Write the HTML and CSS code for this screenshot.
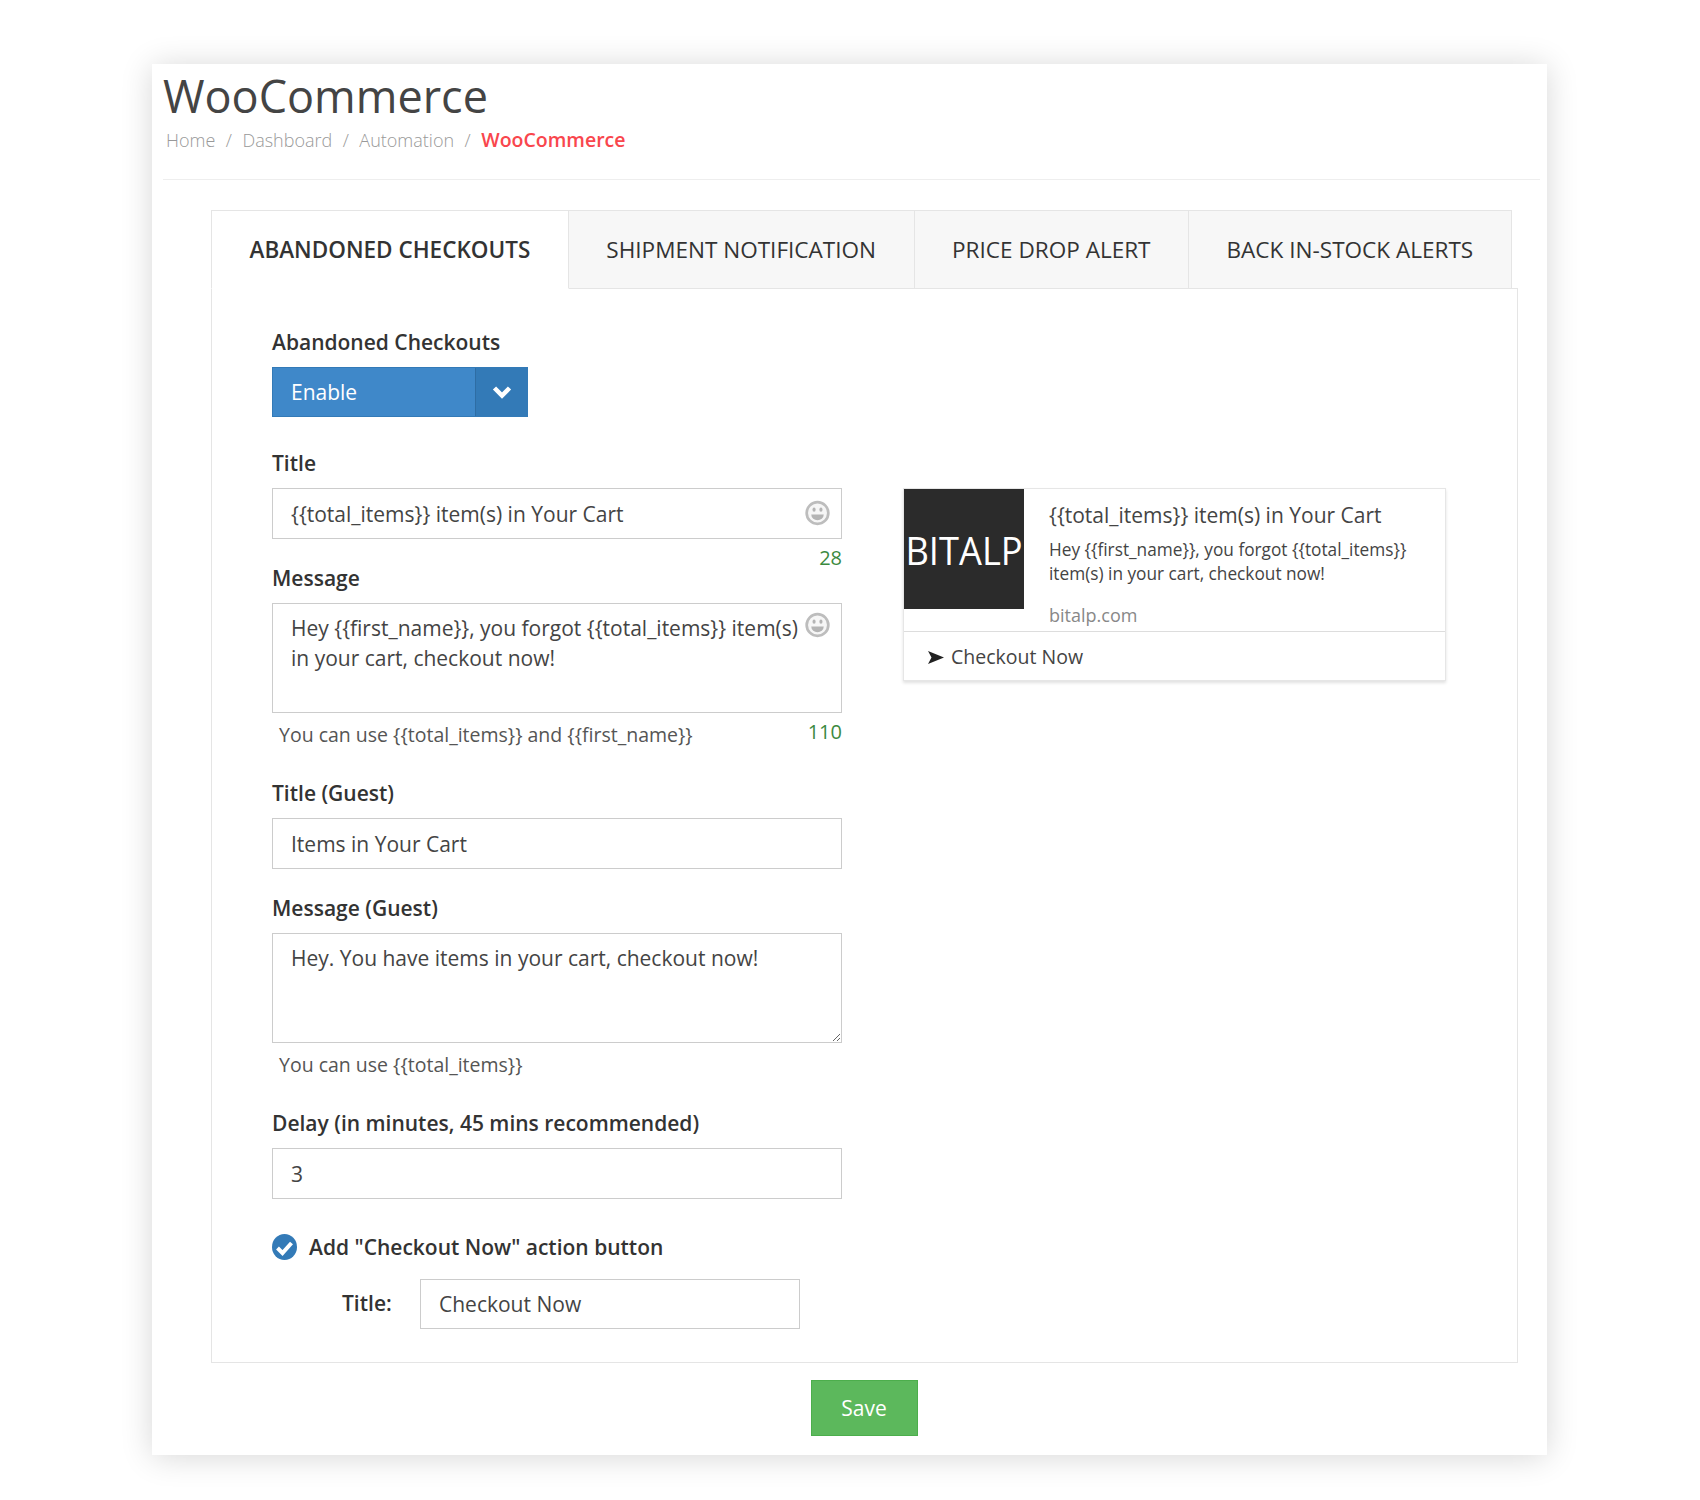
FILE: index.html
```html
<!DOCTYPE html>
<html lang="en">
<head>
  <meta charset="UTF-8">
  <title>WooCommerce</title>
  <link rel="stylesheet" href="styles.css">
</head>

<body>
  <div class="page">
    <div class="page-head">
      <h1>WooCommerce</h1>
      <ul class="crumbs">
        <li>Home</li>
        <li class="sep">/</li>
        <li>Dashboard</li>
        <li class="sep">/</li>
        <li>Automation</li>
        <li class="sep">/</li>
        <li class="current">WooCommerce</li>
      </ul>
    </div>

    <div class="tabs">
      <div class="tab active">ABANDONED CHECKOUTS</div>
      <div class="tab">SHIPMENT NOTIFICATION</div>
      <div class="tab">PRICE DROP ALERT</div>
      <div class="tab">BACK IN-STOCK ALERTS</div>
    </div>

    <div class="panel">
      <label class="label">Abandoned Checkouts</label>
      <div class="select">
        <span class="select-value">Enable</span>
        <span class="select-arrow">
          <svg width="20" height="14" viewBox="0 0 20 14"><path d="M2.5 3 L10 10.5 L17.5 3" fill="none" stroke="#fff" stroke-width="4.5"/></svg>
        </span>
      </div>

      <div class="columns">
        <div class="form-col">
          <label class="label">Title</label>
          <div class="with-emoji">
            <input class="input" type="text" value="{{total_items}} item(s) in Your Cart">
            <svg class="emoji" viewBox="0 0 24 24"><circle cx="12" cy="12" r="10.4" fill="#f6f6f6" stroke="#bdbdbd" stroke-width="2.6"/><ellipse cx="8.7" cy="8.8" rx="1.5" ry="2" fill="#b4b4b4"/><ellipse cx="15.3" cy="8.8" rx="1.5" ry="2" fill="#b4b4b4"/><path d="M6 13.5 h12 a6 5.5 0 0 1 -12 0 z" fill="#b4b4b4"/></svg>
          </div>
          <div class="meta short">
            <span class="count">28</span>
          </div>

          <label class="label">Message</label>
          <div class="with-emoji">
            <textarea class="input area no-resize">Hey {{first_name}}, you forgot {{total_items}} item(s) in your cart, checkout now!</textarea>
            <svg class="emoji emoji-top" viewBox="0 0 24 24"><circle cx="12" cy="12" r="10.4" fill="#f6f6f6" stroke="#bdbdbd" stroke-width="2.6"/><ellipse cx="8.7" cy="8.8" rx="1.5" ry="2" fill="#b4b4b4"/><ellipse cx="15.3" cy="8.8" rx="1.5" ry="2" fill="#b4b4b4"/><path d="M6 13.5 h12 a6 5.5 0 0 1 -12 0 z" fill="#b4b4b4"/></svg>
          </div>
          <div class="meta">
            <span class="hint">You can use {{total_items}} and {{first_name}}</span>
            <span class="count">110</span>
          </div>

          <label class="label">Title (Guest)</label>
          <input class="input" type="text" value="Items in Your Cart">
          <div class="gap"></div>

          <label class="label">Message (Guest)</label>
          <textarea class="input area">Hey. You have items in your cart, checkout now!</textarea>
          <div class="meta">
            <span class="hint">You can use {{total_items}}</span>
          </div>

          <label class="label">Delay (in minutes, 45 mins recommended)</label>
          <input class="input" type="text" value="3">

          <div class="check-row">
            <svg class="check" viewBox="0 0 25 26"><ellipse cx="12.5" cy="13" rx="12.5" ry="13" fill="#337ab7"/><path d="M5.5 14 L10.5 19 L19.5 9" fill="none" stroke="#fff" stroke-width="4"/></svg>
            <span class="check-label">Add "Checkout Now" action button</span>
          </div>

          <div class="inline-field">
            <span class="inline-label">Title:</span>
            <input class="input inline-input" type="text" value="Checkout Now">
          </div>
        </div>

        <div class="preview">
          <div class="preview-body">
            <div class="preview-logo"><span class="logo-text">BITALP</span></div>
            <div class="preview-text">
              <div class="preview-title">{{total_items}} item(s) in Your Cart</div>
              <div class="preview-msg">Hey {{first_name}}, you forgot {{total_items}} item(s) in your cart, checkout now!</div>
              <div class="preview-site">bitalp.com</div>
            </div>
          </div>
          <div class="preview-action">
            <svg class="arrow" viewBox="0 0 16 13"><path d="M0 0 L16 6.5 L0 13 L3.5 6.5 z" fill="#222"/></svg>
            Checkout Now
          </div>
        </div>
      </div>
    </div>

    <div class="actions">
      <button class="save">Save</button>
    </div>
  </div>
</body>
</html>
```

FILE: styles.css
```css
* {
  box-sizing: border-box;
}

body {
  margin: 0;
  min-height: 1500px;
  padding: 64px 0 0 152px;
  background-color: #fff;
  font-family: "Open Sans", sans-serif;
  color: #333;
}

.page {
  width: 1395px;
  height: 1391px;
  padding: 0 11px;
  background-color: #fff;
  box-shadow: 0 2px 30px rgba(0, 0, 0, 0.16);
}

.page-head {
  height: 116px;
  border-bottom: 1px solid #eee;
  margin-right: -4px;
}

h1 {
  margin: 0;
  padding-top: 2px;
  font-size: 45px;
  line-height: 60px;
  font-weight: 400;
  color: #444;
}

.crumbs {
  display: flex;
  align-items: baseline;
  gap: 10.5px;
  margin: 0;
  padding: 1px 0 0 3px;
  list-style: none;
  font-size: 18px;
  line-height: 26px;
  font-weight: 300;
  color: #999;
}

.crumbs .current {
  color: #f9464d;
  font-size: 19.5px;
  font-weight: 600;
}

.tabs {
  display: flex;
  margin: 30px 0 0 48px;
  position: relative;
  z-index: 1;
}

.tab {
  height: 79px;
  padding: 0 37.5px;
  border: 1px solid #e5e5e5;
  border-left: 0;
  background-color: #f7f7f7;
  font-size: 22.55px;
  line-height: 78px;
  color: #333;
}

.tab.active {
  border-left: 1px solid #e5e5e5;
  border-bottom-color: #fff;
  background-color: #fff;
  font-size: 22.5px;
  font-weight: 600;
}

.panel {
  width: 1307px;
  height: 1075px;
  margin: -1px 0 0 48px;
  padding: 41px 60px 0;
  border: 1px solid #e5e5e5;
}

.label {
  display: block;
  height: 24px;
  margin-bottom: 13px;
  font-size: 21px;
  line-height: 24px;
  font-weight: 600;
  color: #333;
}

.select {
  display: flex;
  width: 256px;
  height: 50px;
  background-color: #3f88c9;
  border: 1px solid #337ab7;
  color: #fff;
  font-size: 21px;
}

.select-value {
  flex: 1;
  padding-left: 18px;
  line-height: 49px;
}

.select-arrow {
  display: flex;
  align-items: center;
  justify-content: center;
  width: 52px;
  background-color: #337ab7;
  border-left: 1px solid #2e6da4;
}

.columns {
  display: flex;
  gap: 61px;
  margin-top: 34px;
}

.form-col {
  width: 570px;
}

.with-emoji {
  position: relative;
}

.input {
  display: block;
  width: 570px;
  height: 51px;
  padding: 1px 18px 0;
  border: 1px solid #ccc;
  background-color: #fff;
  font-family: "Open Sans", sans-serif;
  font-size: 21px;
  color: #444;
  outline: none;
}

.area {
  height: 110px;
  padding: 9px 30px 0 18px;
  line-height: 30px;
}

.no-resize {
  resize: none;
}

.emoji {
  position: absolute;
  top: 12px;
  right: 12px;
  width: 25px;
  height: 26px;
}

.emoji-top {
  top: 9px;
}

.meta {
  display: flex;
  justify-content: space-between;
  height: 68px;
  padding: 7px 0 0 7px;
  font-size: 19.5px;
  line-height: 30px;
}

.meta.short {
  height: 27px;
  padding-top: 4px;
}

.hint {
  color: #555;
}

.count {
  margin: -3px 0 0 auto;
  font-size: 20px;
  color: #3c8a3f;
}

.short .count {
  margin-top: 0;
}

.gap {
  height: 27px;
}

.check-row {
  display: flex;
  align-items: center;
  gap: 12px;
  margin-top: 35px;
}

.check {
  width: 25px;
  height: 26px;
}

.check-label {
  font-size: 21px;
  line-height: 26px;
  font-weight: 600;
  color: #333;
}

.inline-field {
  display: flex;
  align-items: center;
  margin: 19px 0 0 70px;
}

.inline-label {
  width: 78px;
  padding-bottom: 2px;
  font-size: 21px;
  font-weight: 600;
  color: #333;
}

.inline-input {
  width: 380px;
  height: 50px;
  padding-top: 0;
}

.preview {
  width: 543px;
  height: 193px;
  margin-top: 37px;
  border: 1px solid #e6e6e6;
  box-shadow: 0 2px 3px rgba(0, 0, 0, 0.12);
}

.preview-body {
  display: flex;
  gap: 25px;
  height: 143px;
  border-bottom: 1px solid #ddd;
}

.preview-logo {
  display: flex;
  justify-content: center;
  flex: none;
  width: 120px;
  height: 120px;
  background-color: #2b2b2b;
  color: #fff;
  font-size: 39px;
  line-height: 122px;
  overflow: hidden;
}

.logo-text {
  flex: none;
  transform: scaleX(0.93);
}

.preview-text {
  padding-top: 12px;
}

.preview-title {
  font-size: 21px;
  line-height: 28px;
  color: #444;
}

.preview-msg {
  width: 370px;
  margin-top: 9px;
  font-size: 17.25px;
  line-height: 24px;
  color: #444;
}

.preview-site {
  margin-top: 17px;
  font-size: 18px;
  line-height: 24px;
  color: #888;
}

.preview-action {
  padding-left: 24px;
  font-size: 19.5px;
  line-height: 49px;
  color: #444;
}

.arrow {
  width: 16px;
  height: 13px;
  margin-right: 2px;
}

.actions {
  display: flex;
  justify-content: center;
  width: 1306px;
  margin: 17px 0 0 48px;
}

.save {
  width: 107px;
  height: 56px;
  padding-bottom: 2px;
  border: 1px solid #4cae4c;
  background-color: #5cb85c;
  color: #fff;
  font-family: "Open Sans", sans-serif;
  font-size: 21px;
}
```
